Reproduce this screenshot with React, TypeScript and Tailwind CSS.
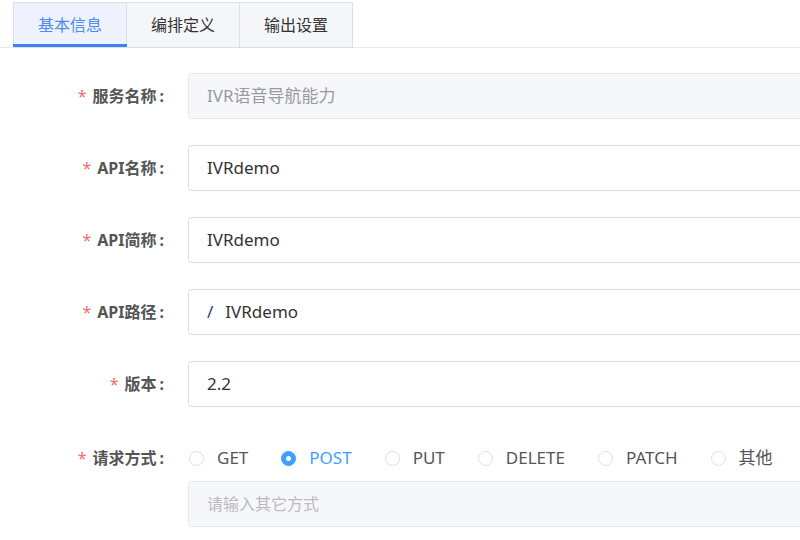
import { useState } from 'react';

const FONT = { fontFamily: '"Noto Sans", "Noto Sans CJK SC", sans-serif' };

const TABS = ['基本信息', '编排定义', '输出设置'];
const METHODS = ['GET', 'POST', 'PUT', 'DELETE', 'PATCH', '其他'];

function Label({ text }: { text: string }) {
  return (
    <div className="w-[164px] shrink-0 whitespace-nowrap text-right text-[16px] font-bold text-[#555]">
      <span className="mr-[6px] font-normal text-[#f56c6c]">*</span>
      {text}
      <span className="ml-[3px]">:</span>
    </div>
  );
}

function Row({ label, value, disabled, prefix }: { label: string; value: string; disabled?: boolean; prefix?: string }) {
  return (
    <div className="flex items-center">
      <Label text={label} />
      <div
        className={`ml-[24px] flex h-[46px] flex-1 items-center rounded-l-[4px] border border-r-0 px-[18px] text-[17px] ${disabled ? 'border-[#e4e7ed] bg-[#f5f7fa] text-[#9a9a9a]' : 'border-[#dcdfe6] bg-white text-[#333]'}`}
      >
        {prefix && <span className="mr-[12px] text-[#2c3e6b]">{prefix}</span>}
        {value}
      </div>
    </div>
  );
}

export default function App() {
  const [tab, setTab] = useState(0);
  const [method, setMethod] = useState('POST');

  return (
    <div className="h-[540px] w-[800px] overflow-hidden bg-white" style={FONT}>
      <div className="flex border-b border-[#e4e7ed] pl-[13px] pt-[2px]">
        {TABS.map((t, i) => (
          <button
            key={t}
            onClick={() => setTab(i)}
            className={`relative -mb-px h-[46px] border border-l-0 border-[#dcdfe6] px-[24px] text-[16px] first:border-l ${i === tab ? 'bg-[#eef2fd] text-[#4d8af0]' : 'bg-[#f5f6fa] text-[#333]'}`}
          >
            {t}
            {i === tab && <span className="absolute bottom-0 left-[-1px] right-[-1px] h-[3px] bg-[#3d84f0]" />}
          </button>
        ))}
      </div>

      <div className="flex flex-col gap-[26px] pt-[25px]">
        <Row label="服务名称" value="IVR语音导航能力" disabled />
        <Row label="API名称" value="IVRdemo" />
        <Row label="API简称" value="IVRdemo" />
        <Row label="API路径" value="IVRdemo" prefix="/" />
        <Row label="版本" value="2.2" />

        <div>
          <div className="flex h-[50px] items-center">
            <Label text="请求方式" />
            <div className="ml-[25px] flex items-center whitespace-nowrap">
              {METHODS.map((m) => {
                const on = m === method;
                return (
                  <label key={m} className="mr-[33px] flex shrink-0 cursor-pointer items-center gap-[13px]" onClick={() => setMethod(m)}>
                    <span
                      className={`flex h-[15px] w-[15px] items-center justify-center rounded-full border ${on ? 'border-[#409eff] bg-[#409eff]' : 'border-[#dcdfe6] bg-white'}`}
                    >
                      {on && <span className="h-[5px] w-[5px] rounded-full bg-white" />}
                    </span>
                    <span className={`text-[17px] ${on ? 'text-[#409eff]' : 'text-[#555]'}`}>{m}</span>
                  </label>
                );
              })}
            </div>
          </div>
          <div className="ml-[188px] mt-[-2px] flex h-[46px] items-center rounded-l-[4px] border border-r-0 border-[#e4e7ed] bg-[#f5f7fa] px-[18px] text-[16px] text-[#bbb]">
            请输入其它方式
          </div>
        </div>
      </div>
    </div>
  );
}
